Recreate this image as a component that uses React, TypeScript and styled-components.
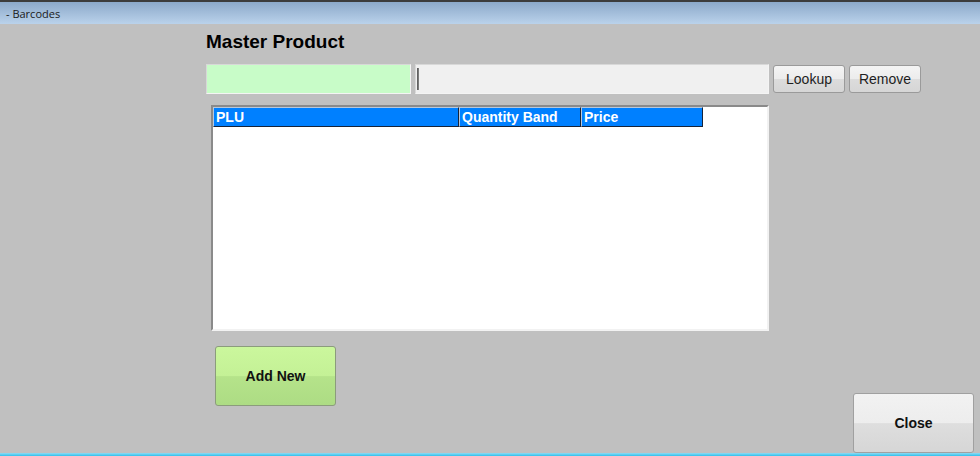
import React from "react";
import styled, { createGlobalStyle } from "styled-components";

const Global = createGlobalStyle`
  html, body { margin: 0; padding: 0; }
  body { background: #c0c0c0; font-family: "Liberation Sans", Arial, sans-serif; }
  * { box-sizing: border-box; }
`;

const Window = styled.div`
  width: 980px;
  height: 456px;
  display: flex;
  flex-direction: column;
  background: #c0c0c0;
  overflow: hidden;
`;

const TitleBar = styled.div`
  height: 24px;
  flex: none;
  border-top: 2px solid #3c3c3c;
  background: linear-gradient(#8ca9ca, #bad2eb);
  display: flex;
  align-items: center;
  padding-left: 6px;
  font-family: "Open Sans", "Noto Sans", sans-serif;
  font-size: 11px;
  color: #1a1a1a;
`;

const Body = styled.div`
  flex: 1;
  display: flex;
  min-height: 0;
`;

const Content = styled.div`
  width: 564px;
  margin-left: 206px;
  display: flex;
  flex-direction: column;
  align-items: flex-start;
`;

const Side = styled.div`
  flex: 1;
  display: flex;
  flex-direction: column;
  justify-content: flex-end;
  align-items: flex-end;
  padding-right: 6px;
`;

const Heading = styled.h1`
  margin: 7px 0 0 0;
  font-size: 19px;
  line-height: 22px;
  font-weight: bold;
  color: #000;
`;

const Row = styled.div`
  margin-top: 11px;
  display: flex;
  align-items: center;
  gap: 4px;
  height: 30px;
`;

const Field = styled.div<{ $w: number; $bg: string }>`
  width: ${(p) => p.$w}px;
  height: 30px;
  background: ${(p) => p.$bg};
  border: 1px solid #e6e6e6;
  border-color: #d8d8d8 #f4f4f4 #f4f4f4 #d8d8d8;
  display: flex;
  align-items: center;
  padding-left: 1px;
`;

const Caret = styled.span`
  width: 2px;
  height: 22px;
  background: linear-gradient(90deg, #555, #888);
`;

const Button = styled.button`
  width: 72px;
  height: 28px;
  margin: 0;
  padding: 0;
  border: 1px solid #9a9a9a;
  border-radius: 3px;
  background: linear-gradient(#f4f4f4 0%, #ececec 50%, #dcdcdc 51%, #d6d6d6 100%);
  font-family: "Liberation Sans", Arial, sans-serif;
  font-size: 14px;
  color: #1e1e1e;
  position: relative;
  top: 0;
`;

const Grid = styled.div`
  margin: 11px 0 0 5px;
  width: 558px;
  height: 226px;
  background: #fff;
  border-style: solid;
  border-width: 2px;
  border-color: #8a8a8a #f2f2f2 #f2f2f2 #8a8a8a;
  display: flex;
  flex-direction: column;
`;

const HeaderRow = styled.div`
  display: flex;
  height: 20px;
`;

const HeaderCell = styled.div<{ $w: number }>`
  width: ${(p) => p.$w}px;
  height: 20px;
  background: #0080ff;
  color: #fff;
  font-weight: bold;
  font-size: 14px;
  line-height: 18px;
  padding-left: 2px;
  border-style: solid;
  border-width: 1px;
  border-color: #b8c8dc #16243a #16243a #b8c8dc;
  white-space: nowrap;
`;

const BigButton = styled.button<{ $green?: boolean }>`
  width: 121px;
  height: 60px;
  margin: 0;
  padding: 0;
  border: 1px solid ${(p) => (p.$green ? "#8b9c7c" : "#a0a0a0")};
  border-radius: 3px;
  background: ${(p) =>
    p.$green
      ? "linear-gradient(#cbf79d 0%, #c4f196 50%, #b5e38a 51%, #addc84 100%)"
      : "linear-gradient(#f2f2f2 0%, #ededed 50%, #dedede 51%, #d6d6d6 100%)"};
  font-family: "Liberation Sans", Arial, sans-serif;
  font-weight: bold;
  font-size: 14px;
  color: #111;
`;

const AddWrap = styled.div`
  margin: 15px 0 0 9px;
`;

const BottomEdge = styled.div`
  height: 3px;
  flex: none;
  background: linear-gradient(#8fdcf4, #2fc0ec);
`;

export default function App() {
  return (
    <>
      <Global />
      <Window>
        <TitleBar>- Barcodes</TitleBar>
        <Body>
          <Content>
            <Heading>Master Product</Heading>
            <Row>
              <Field $w={205} $bg="#c8fcc8" />
              <Field $w={354} $bg="#f0f0f0">
                <Caret />
              </Field>
              <Button>Lookup</Button>
              <Button>Remove</Button>
            </Row>
            <Grid>
              <HeaderRow>
                <HeaderCell $w={246}>PLU</HeaderCell>
                <HeaderCell $w={122}>Quantity Band</HeaderCell>
                <HeaderCell $w={122}>Price</HeaderCell>
              </HeaderRow>
            </Grid>
            <AddWrap>
              <BigButton $green>Add New</BigButton>
            </AddWrap>
          </Content>
          <Side>
            <BigButton>Close</BigButton>
          </Side>
        </Body>
        <BottomEdge />
      </Window>
    </>
  );
}
